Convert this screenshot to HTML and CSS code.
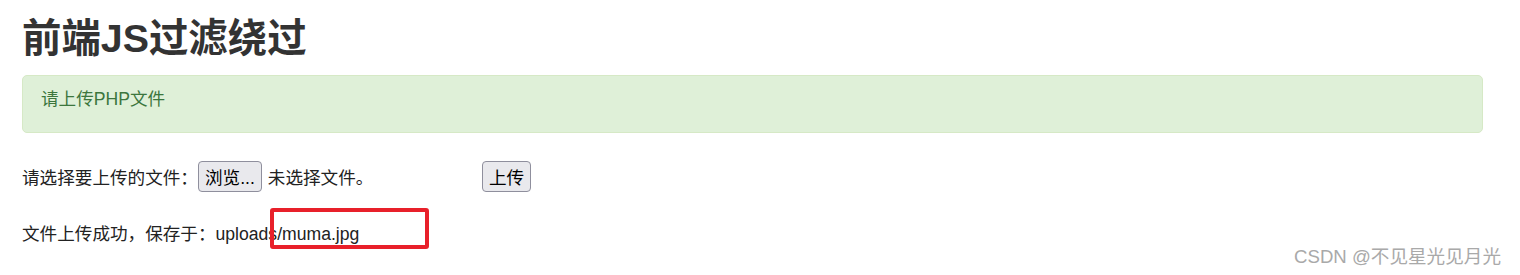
FILE: index.html
```html
<!DOCTYPE html>
<html lang="zh-CN">
<head>
<meta charset="utf-8">
<title>前端JS过滤绕过</title>
<link rel="stylesheet" href="styles.css">
</head>
<body>
<div class="page">
  <h1 class="title">前端JS过滤绕过</h1>
  <div class="alert">请上传PHP文件</div>
  <form class="upload-row">
    <span class="label">请选择要上传的文件：</span>
    <span class="file-input">
      <span class="btn">浏览...</span>
      <span class="file-name">未选择文件。</span>
    </span>
    <span class="btn">上传</span>
  </form>
  <div class="result">
    <span>文件上传成功，保存于：uploads/muma.jpg</span>
    <span class="mark"></span>
  </div>
</div>
<div class="watermark">CSDN @不见星光见月光</div>
</body>
</html>
```

FILE: styles.css
```css
html, body {
  margin: 0;
  padding: 0;
  background: #ffffff;
}
body {
  font-family: "Liberation Sans", "Noto Sans CJK SC", sans-serif;
  font-size: 17.6px;
  color: #333333;
  width: 1520px;
  height: 275px;
  overflow: hidden;
  position: relative;
}
.page {
  padding: 16px 37px 0 22px;
}
.title {
  margin: 0;
  font-size: 39.4px;
  line-height: 44px;
  font-weight: bold;
  color: #333333;
}
.alert {
  margin-top: 15px;
  background: #dff0d8;
  border: 1px solid #d6e9c6;
  border-radius: 5px;
  color: #3c763d;
  padding: 12px 18px 22px 18px;
  line-height: 22px;
}
.upload-row {
  margin: 28px 0 0 0;
  display: flex;
  align-items: center;
  height: 31px;
  color: #222;
}
.file-input {
  display: flex;
  align-items: center;
  width: 280px;
  margin-right: 4px;
}
.btn {
  display: inline-flex;
  align-items: center;
  padding: 0 6px;
  background: #e9e9ed;
  border: 1px solid #8f8f9d;
  border-radius: 4px;
  color: #000;
  box-sizing: border-box;
  height: 31px;
}
.file-name {
  margin-left: 6px;
}
.result {
  position: relative;
  margin-top: 30px;
  line-height: 24px;
  color: #222;
}
.mark {
  position: absolute;
  left: 248px;
  top: -14px;
  width: 159px;
  height: 41px;
  box-sizing: border-box;
  border: 4px solid #e8202a;
  border-radius: 3px;
}
.watermark {
  position: absolute;
  right: 19px;
  top: 244px;
  font-size: 18.6px;
  line-height: 26px;
  color: #a9a9a9;
}
```
